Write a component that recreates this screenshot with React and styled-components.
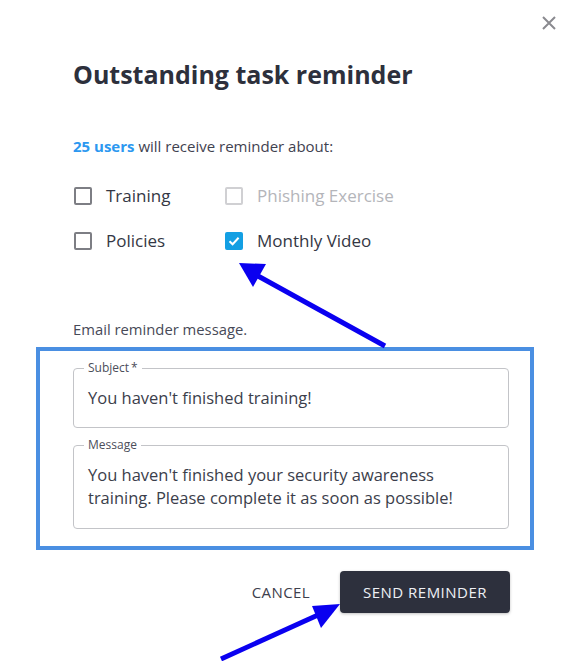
import styled, { createGlobalStyle } from 'styled-components'

const GlobalStyle = createGlobalStyle`
  body {
    margin: 0;
    background: #fff;
    font-family: 'Open Sans', 'Noto Sans', sans-serif;
  }
`

const StyledPage = styled.div`
  position: relative;
  width: 578px;
  height: 661px;
  overflow: hidden;
  background: #fff;
`

const StyledDialog = styled.div`
  padding: 11px 17px 0 73px;
  color: #343744;
`

const StyledCloseRow = styled.div`
  display: flex;
  justify-content: flex-end;
`

const StyledClose = styled.button`
  border: none;
  background: none;
  padding: 4px;
  display: flex;
  cursor: pointer;
`

const StyledTitle = styled.h1`
  margin: 23px 0 0;
  font-size: 25px;
  line-height: 32px;
  font-weight: 700;
  color: #2d303c;
`

const StyledIntro = styled.p`
  margin: 46px 0 0;
  font-size: 15px;
  line-height: 20px;
  color: #3f4250;
`

const StyledCount = styled.span`
  color: #2c98f0;
  font-weight: 700;
`

const StyledOptions = styled.div`
  display: grid;
  grid-template-columns: 151px auto;
  row-gap: 21px;
  margin-top: 28px;
`

const StyledOption = styled.label`
  display: flex;
  align-items: center;
  gap: 14px;
  font-size: 17px;
  line-height: 24px;
  color: ${(props) => (props.$disabled ? '#b4b5ba' : '#343744')};
`

const StyledBox = styled.span`
  width: 18px;
  height: 18px;
  box-sizing: border-box;
  border-radius: 2px;
  border: 2px solid ${(props) => (props.$checked ? '#139fe3' : props.$disabled ? '#d0d0d3' : '#7d7e84')};
  background: ${(props) => (props.$checked ? '#139fe3' : 'transparent')};
  display: flex;
  align-items: center;
  justify-content: center;
  margin-left: 1px;
`

const StyledHint = styled.p`
  margin: 66px 0 0;
  font-size: 14.8px;
  line-height: 20px;
  color: #474a57;
`

const StyledFrame = styled.div`
  margin: 8px 0 0 -37px;
  width: 498px;
  box-sizing: border-box;
  border: 4px solid #4a8fe2;
  padding: 10px 21px 17px 33px;
  display: flex;
  flex-direction: column;
  gap: 10px;
`

const StyledField = styled.fieldset`
  margin: 0;
  padding: 0 14px 0 10px;
  border: 1px solid #c3c4c8;
  border-radius: 4px;
  height: ${(props) => props.$height}px;
  box-sizing: border-box;
`

const StyledLegend = styled.legend`
  padding: 0 4px;
  font-size: 12px;
  line-height: 14px;
  color: #4b4e5a;
`

const StyledValue = styled.div`
  padding: 11px 0 0 4px;
  max-width: 372px;
  font-size: 16.5px;
  line-height: 23px;
  color: #3b3e4b;
`

const StyledActions = styled.div`
  display: flex;
  justify-content: flex-end;
  align-items: center;
  gap: 30px;
  margin-top: 21px;
  padding-right: 51px;
`

const StyledCancel = styled.button`
  border: none;
  background: none;
  font-family: inherit;
  font-size: 15px;
  color: #3d404c;
  letter-spacing: 0.4px;
  padding: 0;
`

const StyledSend = styled.button`
  width: 170px;
  height: 42px;
  border: none;
  border-radius: 4px;
  background: #2d303d;
  color: #eef0f5;
  font-family: inherit;
  font-size: 15px;
  letter-spacing: 0.5px;
  box-shadow: 0 1px 3px rgba(0, 0, 0, 0.25);
`

const StyledArrows = styled.svg`
  position: absolute;
  inset: 0;
  pointer-events: none;
`

const Check = () => (
  <svg width="12" height="10" viewBox="0 0 12 10">
    <path d="M1.5 5.2 L4.6 8.2 L10.6 1.8" fill="none" stroke="#fff" strokeWidth="2" />
  </svg>
)

function Option({ label, checked, disabled }) {
  return (
    <StyledOption $disabled={disabled}>
      <StyledBox $checked={checked} $disabled={disabled}>
        {checked && <Check />}
      </StyledBox>
      {label}
    </StyledOption>
  )
}

function App() {
  return (
    <StyledPage>
      <GlobalStyle />
      <StyledDialog>
        <StyledCloseRow>
          <StyledClose aria-label="close">
            <svg width="16" height="16" viewBox="0 0 16 16">
              <path d="M2 2 L14 14 M14 2 L2 14" stroke="#8a8a8f" strokeWidth="2" />
            </svg>
          </StyledClose>
        </StyledCloseRow>
        <StyledTitle>Outstanding task reminder</StyledTitle>
        <StyledIntro>
          <StyledCount>25 users</StyledCount> will receive reminder about:
        </StyledIntro>
        <StyledOptions>
          <Option label="Training" />
          <Option label="Phishing Exercise" disabled />
          <Option label="Policies" />
          <Option label="Monthly Video" checked />
        </StyledOptions>
        <StyledHint>Email reminder message.</StyledHint>
        <StyledFrame>
          <StyledField $height={67}>
            <StyledLegend>Subject&thinsp;*</StyledLegend>
            <StyledValue>You haven't finished training!</StyledValue>
          </StyledField>
          <StyledField $height={91}>
            <StyledLegend>Message</StyledLegend>
            <StyledValue>
              You haven't finished your security awareness training. Please complete it as soon as possible!
            </StyledValue>
          </StyledField>
        </StyledFrame>
        <StyledActions>
          <StyledCancel>CANCEL</StyledCancel>
          <StyledSend>SEND REMINDER</StyledSend>
        </StyledActions>
      </StyledDialog>
      <StyledArrows width="578" height="661" viewBox="0 0 578 661">
        <line x1="385" y1="346" x2="258" y2="276" stroke="#0a00f0" strokeWidth="5" />
        <polygon points="239,263 266,264 253,287" fill="#0a00f0" />
        <line x1="221" y1="659" x2="318" y2="615" stroke="#0a00f0" strokeWidth="5" />
        <polygon points="340,604 321,628 312,606" fill="#0a00f0" />
      </StyledArrows>
    </StyledPage>
  )
}

export default App
